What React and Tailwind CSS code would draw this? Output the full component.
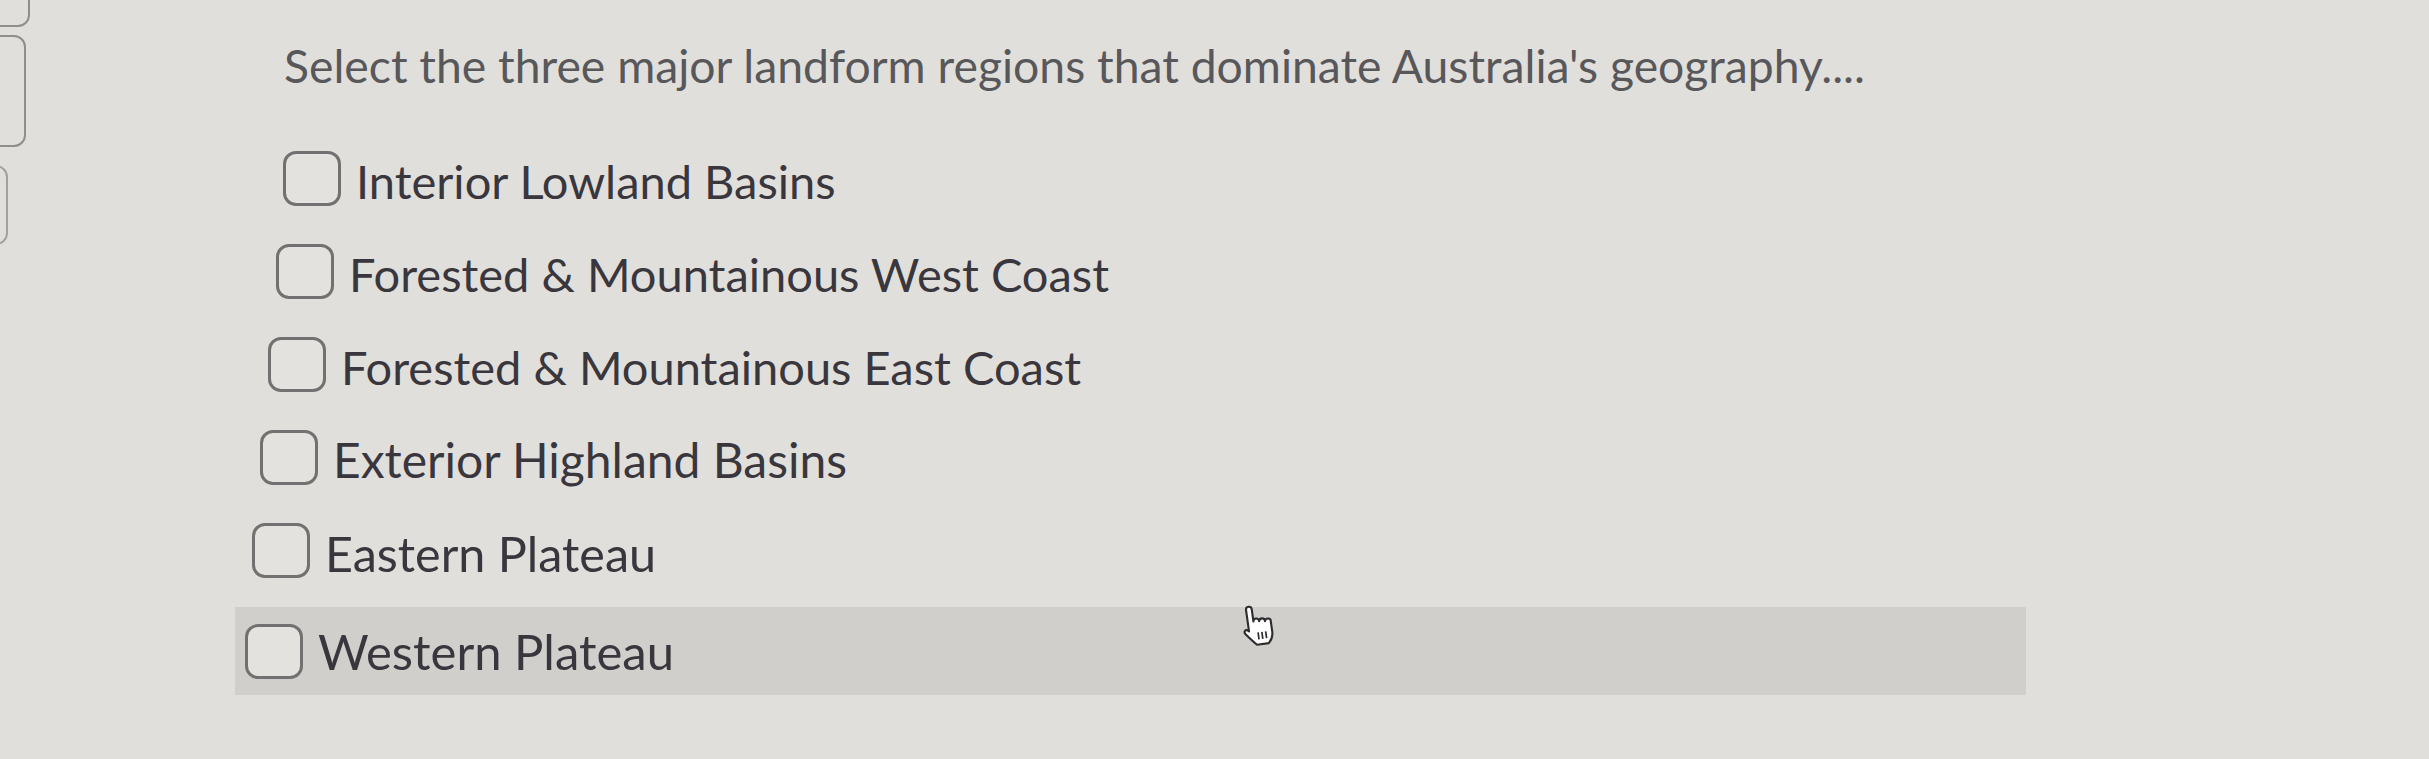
import React from "react";

const options = [
  { label: "Interior Lowland Basins", indent: "ml-[38px]", size: "text-[47px]" },
  { label: "Forested & Mountainous West Coast", indent: "ml-[31px]", size: "text-[47px]" },
  { label: "Forested & Mountainous East Coast", indent: "ml-[23px]", size: "text-[47px]" },
  { label: "Exterior Highland Basins", indent: "ml-[15px]", size: "text-[48px]" },
  { label: "Eastern Plateau", indent: "ml-[7px]", size: "text-[48.5px]" },
];

function Box() {
  return (
    <span className="block w-[58px] h-[55px] shrink-0 rounded-[13px] border-[3px] border-[#727171] bg-[#e4e2de]" />
  );
}

function HandCursor() {
  return (
    <svg width="36" height="44" viewBox="0 0 18 23" className="absolute left-[1238px] top-[604px] rotate-[-8deg]">
      <path
        d="M5,2.5 a1.5,1.5 0 0 1 3,0 V9 a1.5,1.5 0 0 1 3,0.3 a1.5,1.5 0 0 1 3,0.4 a1.5,1.5 0 0 1 3,0.6 V15.5 c0,2.6 -1.3,4.6 -2.6,5.8 H8.2 c-1.2,-1.3 -3.2,-3.7 -5.2,-6.3 c-0.8,-1.1 -0.2,-2.4 1.1,-2 L5,13.8 Z"
        fill="#ffffff"
        stroke="#2d2d2d"
        strokeWidth="1.1"
        strokeLinejoin="round"
      />
      <path d="M9.6 15 V18.6 M11.6 15 V18.6 M13.6 15 V18.6" stroke="#2d2d2d" strokeWidth="0.9" />
    </svg>
  );
}

export default function App() {
  return (
    <div
      className="relative w-[2429px] h-[759px] overflow-hidden flex bg-[#e1dfdb]"
      style={{ fontFamily: "Lato, 'Noto Sans', sans-serif" }}
    >
      {/* partial sidebar at the left edge */}
      <div className="w-[32px] shrink-0 flex flex-col overflow-hidden">
        <div className="-ml-[30px] -mt-[30px] w-[60px] h-[57px] rounded-[12px] border-[2px] border-[#8f8e8c]" />
        <div className="-ml-[36px] mt-[8px] w-[62px] h-[112px] rounded-[12px] border-[2px] border-[#8f8e8c]" />
        <div className="-ml-[50px] mt-[18px] w-[58px] h-[80px] rounded-[12px] border-[2px] border-[#a3a19e]" />
      </div>

      <div className="flex-1 flex flex-col pt-[38px]">
        <h1 className="ml-[252px] text-[46.3px] leading-[55px] font-normal text-[#58585b] whitespace-nowrap">
          Select the three major landform regions that dominate Australia's geography....
        </h1>

        <div className="mt-[55px] flex flex-col">
          {options.map((o) => (
            <label key={o.label} className="ml-[213px] h-[93px] flex items-start">
              <span className={`${o.indent} flex items-center gap-[15px]`}>
                <Box />
                <span className={`${o.size} leading-[56px] pt-[5px] text-[#39373d] whitespace-nowrap`}>{o.label}</span>
              </span>
            </label>
          ))}
          <div className="ml-[203px] -mt-[6px] w-[1791px] h-[88px] bg-[#d1cfcb] flex items-center pl-[10px]">
            <span className="flex items-center gap-[15px]">
              <Box />
              <span className="text-[49px] leading-[56px] text-[#39373d] whitespace-nowrap">Western Plateau</span>
            </span>
          </div>
        </div>
      </div>

      <HandCursor />
    </div>
  );
}
